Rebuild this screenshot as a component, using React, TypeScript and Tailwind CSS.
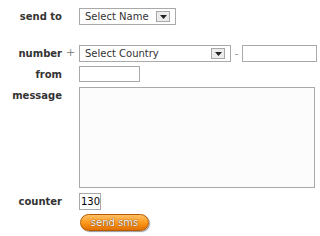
import React from 'react';

function Arrow() {
    return (
        <span className="flex h-[11px] w-[14px] items-center justify-center border border-[#a8a8a8] bg-[#ececec]">
            <svg width="7" height="4" viewBox="0 0 7 4">
                <path d="M0 0h7L3.5 4z" fill="#222" />
            </svg>
        </span>
    );
}

function Label({ children }: { children: React.ReactNode }) {
    return <div className="w-[62px] shrink-0 text-right text-[10px] font-bold text-[#333]">{children}</div>;
}

export default function App() {
    return (
        <div className="h-[236px] w-[320px] bg-white pt-[8px] font-['DejaVu_Sans',sans-serif] text-[10px] text-[#333]">
            <div className="flex h-[17px] items-center">
                <Label>send to</Label>
                <div className="ml-[17px] flex h-[17px] w-[97px] items-center justify-between border border-[#a9a9a9] pl-[5px] pr-[5px]">
                    <span>Select Name</span>
                    <Arrow />
                </div>
            </div>

            <div className="mt-[20px] flex h-[17px] items-center">
                <Label>number</Label>
                <span className="w-[17px] text-center text-[11px] text-[#888]">+</span>
                <div className="flex h-[17px] w-[152px] items-center justify-between border border-[#a9a9a9] pl-[5px] pr-[5px]">
                    <span>Select Country</span>
                    <Arrow />
                </div>
                <span className="w-[11px] text-center text-[#888]">-</span>
                <div className="h-[17px] w-[75px] border border-[#a9a9a9]" />
            </div>

            <div className="mt-[4px] flex h-[16px] items-center">
                <Label>from</Label>
                <div className="ml-[17px] h-[16px] w-[61px] border border-[#a9a9a9]" />
            </div>

            <div className="mt-[5px] flex">
                <div className="pt-[1px]">
                    <Label>message</Label>
                </div>
                <div className="ml-[17px] h-[101px] w-[236px] border border-[#a9a9a9] bg-[#fcfcfc]" />
            </div>

            <div className="mt-[5px] flex h-[17px] items-center">
                <Label>counter</Label>
                <div className="ml-[17px] flex h-[17px] w-[22px] items-center border border-[#a9a9a9] pl-[1px] text-[10px] text-black">130</div>
            </div>

            <div className="ml-[80px] mt-[4px] flex h-[17px] w-[69px] items-center justify-center rounded-full border border-[#b35a00] bg-gradient-to-b from-[#ffc060] via-[#ff9a1a] to-[#e07000] text-[10px] text-white [text-shadow:0_0_1px_#6b3000,0_0_1px_#6b3000] shadow-[1px_1px_1px_#999]">
                send sms
            </div>
        </div>
    );
}
